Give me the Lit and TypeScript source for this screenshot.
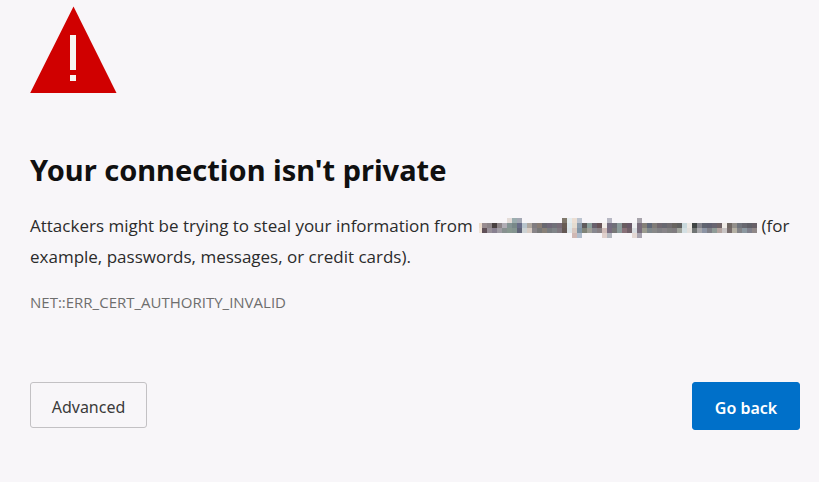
import { LitElement, html, css, svg } from "lit";
import { customElement } from "lit/decorators.js";

// Colours of the censored host name, one row of blocks per line; "-" is an empty block.
const MOSAIC: string[] = [
  "- - - - - - e4dcd8 9caeb0 a4a8b4 - - - - - - - - 80786c e4ecee ecdfd4 bcc4d0 - - - - - b8b8c4 - - - - - a8a4ac - - - - - - - - - - - - - - - - - - - - - - -",
  "ecdccc 988c90 8c8488 484040 8c8488 b0acb4 849494 788888 686c88 b8c4cc b0a8a0 807c80 887c74 686870 706878 707078 786c78 685c54 dce8ec e4dcd0 8c9cac 605c5c 8ca09c 68606c 685458 f0ece8 746c80 707078 8c9c9c 685c60 685868 eceef0 786c7c 848078 606878 807c78 706870 686870 706c70 686460 606060 c8d8dc ece8e4 404444 84848c 606470 606070 686470 706468 f0ece8 706864 94908c 70747c 686870 606068 686068",
  "f0e4d8 605058 989098 888090 a09ca4 889090 889890 849490 606478 ccd2d4 d8ccc4 888488 787878 888078 787c80 808488 807880 645854 dce4e8 d8c8c0 8094a4 808478 a0a098 888890 888084 d0bcb8 786c80 787878 8c9c9c 887078 706068 d8dce0 786c7c 9c9c90 80888c 888888 808084 888488 808080 807c80 a0a49c d4e0e4 e4e0dc 707474 a8a8ac 8c94a4 808088 909c98 b4a4a0 c8c4c4 786c6c b4b0a4 848488 8c98a0 80808c 908888",
  "- - - - - - - - - - - - - - - - - - - d0b8b4 b0bccc - - - - e0d0cc b4b8c0 - - - - e4d8d4 a8a4b0 - - - - - - - - - - - - - - - - - - - - - - -",
];

@customElement("app-root")
export class AppRoot extends LitElement {
  static styles = css`
    :host {
      display: block;
      min-height: 100vh;
      box-sizing: border-box;
      padding: 6px 19px 52px 30px;
      background: #f8f6f9;
      color: #101010;
      font-family: "Open Sans", "Noto Sans", sans-serif;
    }
    .warning {
      display: block;
      width: 87px;
      height: 88px;
    }
    h1 {
      margin: 54px 0 0;
      font-family: "Noto Sans", "Open Sans", sans-serif;
      font-size: 29px;
      line-height: 44px;
      font-weight: 700;
    }
    .message {
      margin: 18px 0 0;
      font-size: 17px;
      line-height: 31px;
      color: #2b2b2b;
    }
    .host {
      width: 280px;
      height: 20px;
      vertical-align: -6px;
    }
    .code {
      margin: 19px 0 0;
      font-size: 15px;
      line-height: 22px;
      color: #6e6e6e;
    }
    .actions {
      display: flex;
      justify-content: space-between;
      align-items: flex-start;
      margin-top: 69px;
    }
    button {
      box-sizing: border-box;
      min-width: 108px;
      height: 48px;
      padding: 4px 20px 0;
      border: 1px solid #0070c9;
      border-radius: 3px;
      background: #0070c9;
      color: #fff;
      font-family: "Noto Sans", "Open Sans", sans-serif;
      font-size: 16px;
      line-height: 24px;
      font-weight: 600;
    }
    .secondary {
      min-width: 117px;
      height: 46px;
      border-color: #c3c1c4;
      background: transparent;
      color: #3b3b3b;
      font-weight: 400;
    }
  `;

  render() {
    return html`
      <svg class="warning" viewBox="0 0 87 88" aria-hidden="true">
        <path d="M43.5 0.5 L86.5 87 H0.2 Z" fill="#d00000" />
        <path d="M40 29h6v35h-6z M40 69h6v6h-6z" fill="#f8f6f2" />
      </svg>
      <h1>Your connection isn't private</h1>
      <p class="message">
        Attackers might be trying to steal your information from
        <svg class="host" viewBox="0 0 280 20" shape-rendering="crispEdges" role="img" aria-label="hidden site">
          ${MOSAIC.map((row, y) =>
            row.split(" ").map((c, x) =>
              c === "-"
                ? null
                : svg`<rect x=${x ? x * 5 : 2} y=${y * 5} width=${x ? 5 : 3} height="5" fill=${"#" + c} />`
            )
          )}
        </svg>
        (for example, passwords, messages, or credit cards).
      </p>
      <p class="code">NET::ERR_CERT_AUTHORITY_INVALID</p>
      <div class="actions">
        <button type="button" class="secondary">Advanced</button>
        <button type="button">Go back</button>
      </div>
    `;
  }
}
